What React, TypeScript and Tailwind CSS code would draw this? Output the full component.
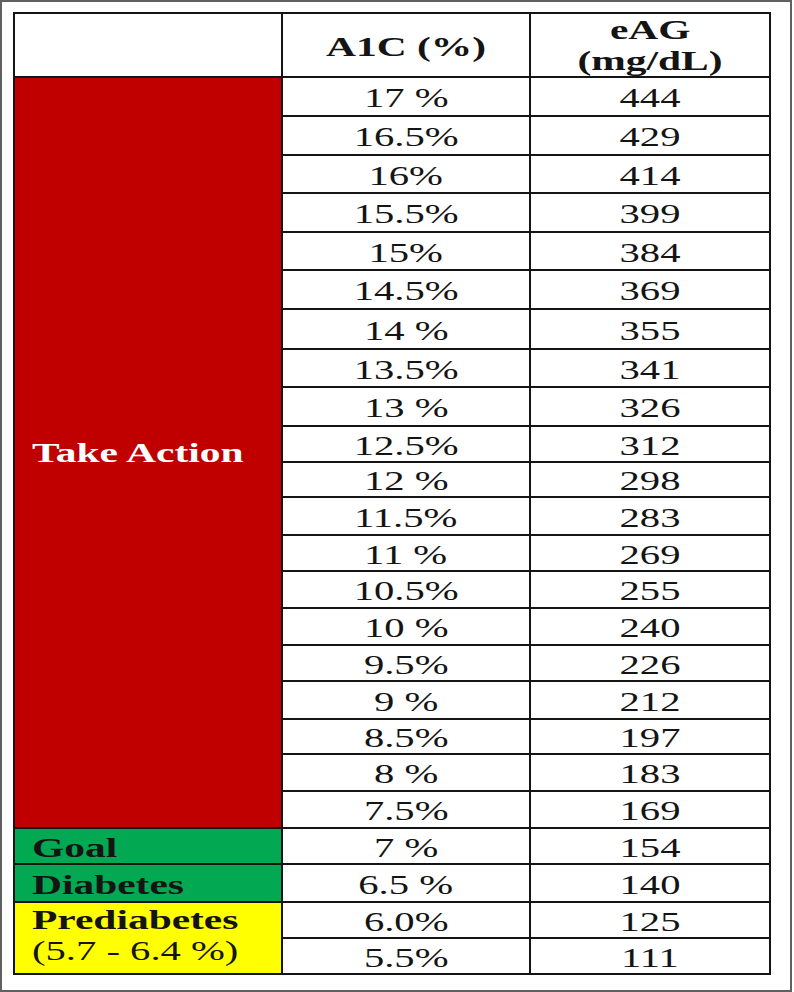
import React from "react"

type Row = { a1c: string; eag: string }

const rows: Row[] = [
  { a1c: "17 %", eag: "444" },
  { a1c: "16.5%", eag: "429" },
  { a1c: "16%", eag: "414" },
  { a1c: "15.5%", eag: "399" },
  { a1c: "15%", eag: "384" },
  { a1c: "14.5%", eag: "369" },
  { a1c: "14 %", eag: "355" },
  { a1c: "13.5%", eag: "341" },
  { a1c: "13 %", eag: "326" },
  { a1c: "12.5%", eag: "312" },
  { a1c: "12 %", eag: "298" },
  { a1c: "11.5%", eag: "283" },
  { a1c: "11 %", eag: "269" },
  { a1c: "10.5%", eag: "255" },
  { a1c: "10 %", eag: "240" },
  { a1c: "9.5%", eag: "226" },
  { a1c: "9 %", eag: "212" },
  { a1c: "8.5%", eag: "197" },
  { a1c: "8 %", eag: "183" },
  { a1c: "7.5%", eag: "169" },
  { a1c: "7 %", eag: "154" },
  { a1c: "6.5 %", eag: "140" },
  { a1c: "6.0%", eag: "125" },
  { a1c: "5.5%", eag: "111" },
]

const cell = "border-r-2 border-b-2 border-[#151515]"

// the source image is stretched sideways, so every label is widened
function Wide({ children, left, bold }: { children: React.ReactNode; left?: boolean; bold?: boolean }) {
  if (bold)
    return (
      <span className={left ? "inline-block origin-left scale-x-[1.48] font-bold" : "inline-block scale-x-[1.48] font-bold"}>
        {children}
      </span>
    )
  return (
    <span className={left ? "inline-block origin-left scale-x-[1.45]" : "inline-block scale-x-[1.45]"}>{children}</span>
  )
}

function LeftCell({ index }: { index: number }) {
  if (index === 0)
    return (
      <div className={`${cell} row-span-20 flex items-center bg-[#c00000] pl-[17px] text-white`}>
        <Wide left bold>
          Take Action
        </Wide>
      </div>
    )
  if (index === 20)
    return (
      <div className={`${cell} flex items-center bg-[#03a852] pl-[17px] pt-[2px]`}>
        <Wide left bold>
          Goal
        </Wide>
      </div>
    )
  if (index === 21)
    return (
      <div className={`${cell} flex items-center bg-[#03a852] pl-[17px] pt-[2px]`}>
        <Wide left bold>
          Diabetes
        </Wide>
      </div>
    )
  if (index === 22)
    return (
      <div className={`${cell} row-span-2 flex flex-col bg-[#ffff00] pl-[17px] pt-[1px] leading-[31px]`}>
        <span>
          <Wide left bold>
            Prediabetes
          </Wide>
        </span>
        <span>
          <Wide left>(5.7 - 6.4 %)</Wide>
        </span>
      </div>
    )
  return null
}

export default function App() {
  return (
    <div className="h-[992px] w-[792px] border-2 border-[#606060] bg-white pl-[11px] pt-[10px]">
      <div className="grid w-[758px] grid-cols-[268px_248px_240px] grid-rows-[64px_39px_39px_38px_39px_38px_39px_40px_38px_39px_36px_35px_38px_36px_37px_37px_36px_38px_35px_37px_37px_36px_38px_36px_36px] border-t-2 border-l-2 border-[#151515] font-['Liberation_Serif',serif] text-[28px] leading-[31px] text-[#141414]">
        <div className={`${cell} bg-white`} />
        <div className={`${cell} flex items-center justify-center pt-[2px]`}>
          <Wide bold>A1C (%)</Wide>
        </div>
        <div className={`${cell} flex flex-col items-center justify-center`}>
          <Wide bold>eAG</Wide>
          <Wide bold>(mg/dL)</Wide>
        </div>
        {rows.map((r, i) => (
          <React.Fragment key={r.eag}>
            <LeftCell index={i} />
            <div className={`${cell} flex items-center justify-center pt-[2px]`}>
              <Wide>{r.a1c}</Wide>
            </div>
            <div className={`${cell} flex items-center justify-center pt-[2px]`}>
              <Wide>{r.eag}</Wide>
            </div>
          </React.Fragment>
        ))}
      </div>
    </div>
  )
}
